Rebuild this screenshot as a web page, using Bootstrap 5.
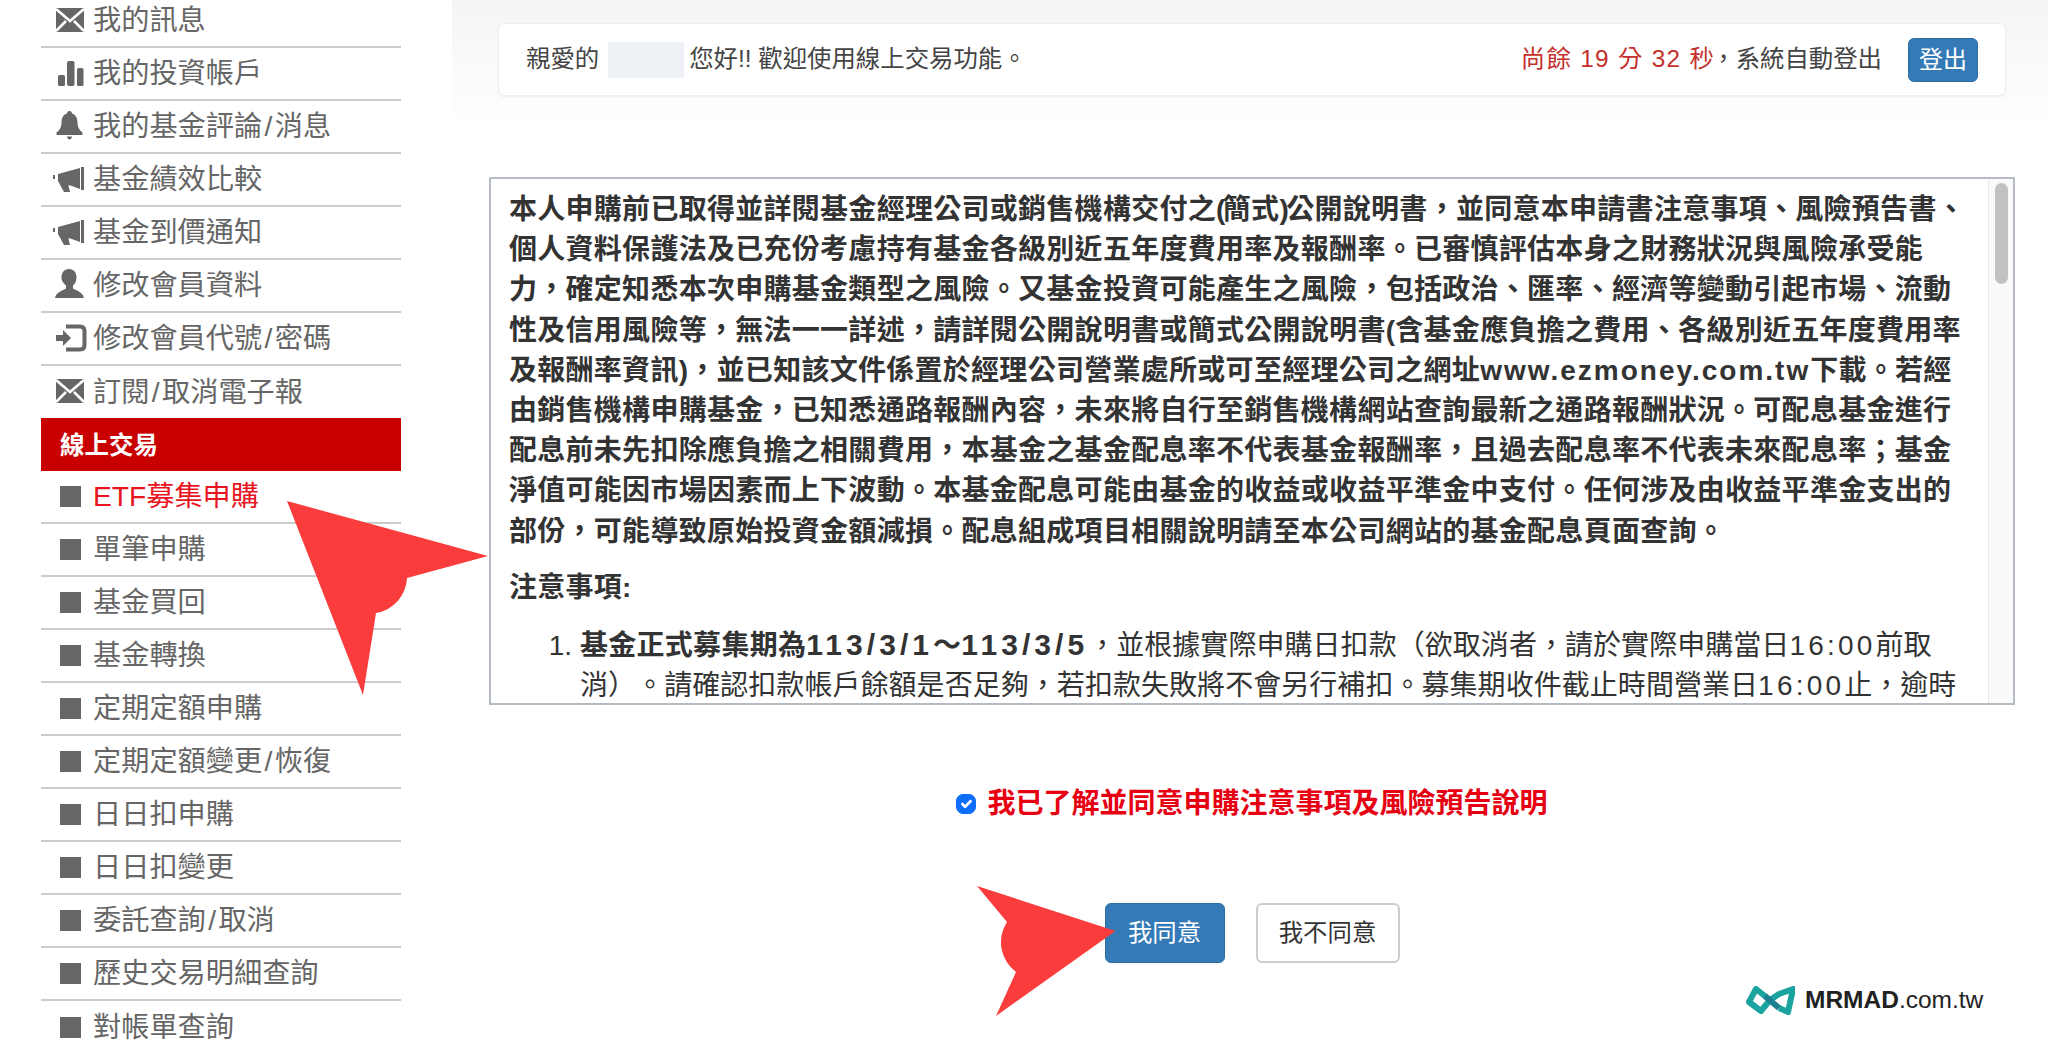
<!DOCTYPE html>
<html lang="zh-Hant">
<head>
    <meta charset="UTF-8">
    <meta name="viewport" content="width=device-width, initial-scale=1.0">
    <title>線上交易</title>
    <link rel="stylesheet" href="https://cdn.jsdelivr.net/npm/bootstrap@5.3.0/dist/css/bootstrap.min.css">
    <style>
        html, body {
            height: 1047px;
            overflow: hidden;
        }
        body {
            font-family: "Liberation Sans", "Noto Sans CJK SC", sans-serif;
            color: #333;
            background: #fff;
            position: relative;
        }
        .side-col {
            width: 452px;
            flex: none;
            padding: 0 51px 0 41px;
            margin-top: -5px;
        }
        .side-item {
            height: 53px;
            padding-left: 12px;
            border-bottom: 2px solid #ccc;
            color: #666;
            font-size: 28.2px;
            line-height: 1;
            text-decoration: none;
        }
        .side-item.no-line {
            height: 52px;
            border-bottom: 0;
        }
        .side-item.active-item { color: #e8141e; }
        .side-slash { padding: 0 2.4px; }
        .side-icon {
            width: 40px;
            flex: none;
            overflow: visible;
        }
        .side-bullet {
            width: 21px;
            height: 21px;
            margin: 0 12px 0 7px;
            flex: none;
            background: #666;
        }
        .side-head {
            height: 53px;
            padding: 3px 0 0 19px;
            background: #c80000;
            color: #fff;
            font-size: 24.5px;
            font-weight: 700;
        }
        .main-col {
            padding: 23px 33px 0 37px;
            background: linear-gradient(#f5f5f5, #fff 130px);
        }
        .greet-card {
            height: 73px;
            margin: 0 9px 0 9px;
            border: 1px solid #eee;
            box-shadow: 0 1px 2px rgba(0, 0, 0, .06);
            font-size: 24.4px;
            color: #444;
        }
        .greet-body { padding: 0 27px 0 27px; }
        .name-mask {
            display: inline-block;
            width: 76px;
            height: 36px;
            margin: 0 5px 0 9px;
            vertical-align: middle;
            background: #eef2f6;
        }
        .time-left {
            margin-right: -4px;
            color: #c4302b;
            letter-spacing: 1.3px;
        }
        .btn-out, .btn-agree {
            --bs-btn-bg: #337ab7;
            --bs-btn-border-color: #2e6da4;
            --bs-btn-hover-bg: #337ab7;
            --bs-btn-color: #fff;
        }
        .btn-out {
            width: 70px;
            height: 44px;
            margin-left: 26px;
            padding: 0;
            font-size: 24px;
        }
        .terms-box {
            height: 528px;
            margin-top: 81px;
            border: 2px solid #b4bbc2;
            background: #fff;
        }
        .terms-text {
            padding: 11px 20px 0 18px;
            overflow: hidden;
            font-size: 28px;
            line-height: 40.2px;
            letter-spacing: .28px;
            text-spacing-trim: space-all;
        }
        .terms-text p { margin-bottom: 0; }
        .terms-text ol {
            margin: 17px 0 0;
            padding-left: 71px;
            line-height: 39.5px;
            letter-spacing: .05px;
        }
        .terms-text strong { letter-spacing: .28px; }
        .paren-tight { letter-spacing: -2.5px; }
        .terms-text strong .num-wide {
            font-size: 30px;
            letter-spacing: 4.05px;
        }
        .num-mid { letter-spacing: 3.2px; }
        .url-wide { letter-spacing: 2px; }
        .bar-track {
            width: 25px;
            flex: none;
            padding: 4px 5px 0 6px;
            border-left: 1px solid #e8e8e8;
            background: #fafafa;
        }
        .bar-thumb {
            height: 101px;
            border-radius: 7px;
            background: #c1c1c1;
        }
        .agree-row {
            height: 40px;
            margin-top: 79px;
            font-size: 28px;
            font-weight: 700;
            color: #e60012;
        }
        .agree-row .form-check-input {
            width: 20px;
            height: 20px;
            margin: 0 11px 0 0;
        }
        .btn-row {
            margin-top: 79px;
            gap: 31px;
        }
        .btn-agree, .btn-reject {
            height: 60px;
            padding: 0;
            font-size: 24.4px;
        }
        .btn-agree { width: 120px; }
        .btn-reject {
            width: 144px;
            --bs-btn-bg: #fff;
            --bs-btn-border-color: #ccc;
            --bs-btn-color: #333;
            border-width: 2px;
        }
        .mark-layer {
            position: absolute;
            left: 0;
            top: 0;
            pointer-events: none;
        }
        .brand-mark {
            position: absolute;
            left: 1746px;
            top: 986px;
            gap: 10px;
            line-height: 1;
            color: #222;
            font-size: 24.5px;
        }
    </style>
</head>
<body>

    <div class="d-flex">
        <!-- 左側選單 -->
        <div class="side-col">
            <a class="side-item d-flex align-items-center">
                <svg class="side-icon" height="28" viewBox="0 0 40 28"><rect x="3" y="1" width="28" height="24" fill="#666"/><path d="M3 2l14 12L31 2M3 24l10-10M31 24L21 14" fill="none" stroke="#fff" stroke-width="2.6"/></svg>
                我的訊息
            </a>
            <a class="side-item d-flex align-items-center">
                <svg class="side-icon" height="28" viewBox="0 0 40 28"><g fill="#666"><rect x="5" y="15" width="7" height="11" rx="1.5"/><rect x="14" y="1" width="7.5" height="25" rx="2"/><rect x="24" y="8" width="6.5" height="18" rx="1.5"/></g></svg>
                我的投資帳戶
            </a>
            <a class="side-item d-flex align-items-center">
                <svg class="side-icon" height="28" viewBox="0 0 40 28"><path fill="#666" d="M16.5 -2c2 0 2.500 1.500 2.500 2.500 4 1.200 5.500 5 5.500 9.500 0 4 2 7.500 5 9.500v2.500H3.500V19.500c3-2 5-5.500 5-9.500 0-4.500 1.500-8.300 5.500-9.500 0-1 .5-2.500 2.500-2.500zM14 23.500h5c-.4 2-1.200 3-2.500 3S14.400 25.500 14 23.500z"/></svg>
                我的基金評論<span class="side-slash">/</span>消息
            </a>
            <a class="side-item d-flex align-items-center">
                <svg class="side-icon" height="28" viewBox="0 0 40 28"><path fill="#666" d="M0 9h2v4H0zM5 8l22-6v21l-11-4-.500 1 1.500 6h-6L5 15zM28 1h3v23h-3z"/></svg>
                基金績效比較
            </a>
            <a class="side-item d-flex align-items-center">
                <svg class="side-icon" height="28" viewBox="0 0 40 28"><path fill="#666" d="M0 9h2v4H0zM5 8l22-6v21l-11-4-.500 1 1.500 6h-6L5 15zM28 1h3v23h-3z"/></svg>
                基金到價通知
            </a>
            <a class="side-item d-flex align-items-center">
                <svg class="side-icon" height="28" viewBox="0 0 40 28"><path fill="#666" d="M16 -3c5 0 7.500 4 7.500 8.500 0 3.500-1.500 6.500-3.500 8v3c3 2 10 3.500 11 9.500H2c1-6 8-7.500 11-9.500v-3c-2-1.500-4.500-4.500-4.500-8C8.500 1 11-3 16-3z"/></svg>
                修改會員資料
            </a>
            <a class="side-item d-flex align-items-center">
                <svg class="side-icon" height="28" viewBox="0 0 40 28"><path fill="#666" d="M3 10h7V5l8 8-8 8v-5H3z"/><path fill="none" stroke="#666" stroke-width="4" d="M13 1.500h14c3 0 4.500 1.500 4.500 4.500v14c0 3-1.500 4.500-4.500 4.500H13"/></svg>
                修改會員代號<span class="side-slash">/</span>密碼
            </a>
            <a class="side-item no-line d-flex align-items-center">
                <svg class="side-icon" height="28" viewBox="0 0 40 28"><rect x="3" y="1" width="28" height="24" fill="#666"/><path d="M3 2l14 12L31 2M3 24l10-10M31 24L21 14" fill="none" stroke="#fff" stroke-width="2.6"/></svg>
                訂閱<span class="side-slash">/</span>取消電子報
            </a>
            <div class="side-head d-flex align-items-center">線上交易</div>
            <a class="side-item active-item d-flex align-items-center"><span class="side-bullet"></span>ETF募集申購</a>
            <a class="side-item d-flex align-items-center"><span class="side-bullet"></span>單筆申購</a>
            <a class="side-item d-flex align-items-center"><span class="side-bullet"></span>基金買回</a>
            <a class="side-item d-flex align-items-center"><span class="side-bullet"></span>基金轉換</a>
            <a class="side-item d-flex align-items-center"><span class="side-bullet"></span>定期定額申購</a>
            <a class="side-item d-flex align-items-center"><span class="side-bullet"></span>定期定額變更<span class="side-slash">/</span>恢復</a>
            <a class="side-item d-flex align-items-center"><span class="side-bullet"></span>日日扣申購</a>
            <a class="side-item d-flex align-items-center"><span class="side-bullet"></span>日日扣變更</a>
            <a class="side-item d-flex align-items-center"><span class="side-bullet"></span>委託查詢<span class="side-slash">/</span>取消</a>
            <a class="side-item d-flex align-items-center"><span class="side-bullet"></span>歷史交易明細查詢</a>
            <a class="side-item no-line d-flex align-items-center"><span class="side-bullet"></span>對帳單查詢</a>
        </div>

        <!-- 主內容 -->
        <div class="main-col flex-grow-1">
            <div class="card greet-card">
                <div class="greet-body d-flex h-100 justify-content-between align-items-center">
                    <div>親愛的<span class="name-mask"></span>您好!! 歡迎使用線上交易功能。</div>
                    <div class="d-flex align-items-center">
                        <span><span class="time-left">尚餘 19 分 32 秒</span>，系統自動登出</span>
                        <button class="btn btn-primary btn-out" type="button">登出</button>
                    </div>
                </div>
            </div>

            <div class="terms-box d-flex">
                <div class="terms-text flex-grow-1">
                    <p class="fw-bold">本人申購前已取得並詳閱基金經理公司或銷售機構交付之<span class="paren-tight">(</span>簡式<span class="paren-tight">)</span>公開說明書，並同意本申請書注意事項、風險預告書、個人資料保護法及已充份考慮持有基金各級別近五年度費用率及報酬率。已審慎評估本身之財務狀況與風險承受能力，確定知悉本次申購基金類型之風險。又基金投資可能產生之風險，包括政治、匯率、經濟等變動引起市場、流動性及信用風險等，無法一一詳述，請詳閱公開說明書或簡式公開說明書(含基金應負擔之費用、各級別近五年度費用率及報酬率資訊)，並已知該文件係置於經理公司營業處所或可至經理公司之網址<span class="url-wide">www.ezmoney.com.tw</span>下載。若經由銷售機構申購基金，已知悉通路報酬內容，未來將自行至銷售機構網站查詢最新之通路報酬狀況。可配息基金進行配息前未先扣除應負擔之相關費用，本基金之基金配息率不代表基金報酬率，且過去配息率不代表未來配息率；基金淨值可能因市場因素而上下波動。本基金配息可能由基金的收益或收益平準金中支付。任何涉及由收益平準金支出的部份，可能導致原始投資金額減損。配息組成項目相關說明請至本公司網站的基金配息頁面查詢。</p>
                    <p class="fw-bold mt-3">注意事項:</p>
                    <ol>
                        <li><strong>基金正式募集期為<span class="num-wide">113/3/1</span>～<span class="num-wide">113/3/5</span></strong>，並根據實際申購日扣款（欲取消者，請於實際申購當日<span class="num-mid">16:00</span>前取消）。請確認扣款帳戶餘額是否足夠，若扣款失敗將不會另行補扣。募集期收件截止時間營業日<span class="num-mid">16:00</span>止，逾時</li>
                    </ol>
                </div>
                <div class="bar-track"><div class="bar-thumb"></div></div>
            </div>

            <div class="agree-row d-flex justify-content-center align-items-center">
                <input class="form-check-input" type="checkbox" id="agreeCheck" checked>
                <label for="agreeCheck">我已了解並同意申購注意事項及風險預告說明</label>
            </div>

            <div class="btn-row d-flex justify-content-center">
                <button class="btn btn-primary btn-agree" type="button">我同意</button>
                <button class="btn btn-reject" type="button">我不同意</button>
            </div>
        </div>
    </div>

    <!-- 標註箭頭 -->
    <svg class="mark-layer" width="2048" height="1047" viewBox="0 0 2048 1047">
        <path fill="#fa3c3c" d="M287 501L488 556 407 578A37 37 0 0 1 376 613L363 695Z"/>
        <path fill="#fa3c3c" d="M977 886L1115.500 931 996 1016 1016 972A37 37 0 0 1 1007 922Z"/>
    </svg>

    <div class="brand-mark d-flex align-items-center">
        <svg width="49" height="29" viewBox="0 0 49 29">
            <path d="M24 14L10 3 3 16l12 9 9-11 9-6 14-5-5 23-9-4" fill="none" stroke="#1aa39f" stroke-width="6" stroke-linejoin="round"/>
            <path d="M19 10l14 12" fill="none" stroke="#1c7f90" stroke-width="6"/>
        </svg>
        <span><b>MRMAD</b>.com.tw</span>
    </div>

    <script src="https://cdn.jsdelivr.net/npm/bootstrap@5.3.0/dist/js/bootstrap.bundle.min.js"></script>
</body>
</html>
